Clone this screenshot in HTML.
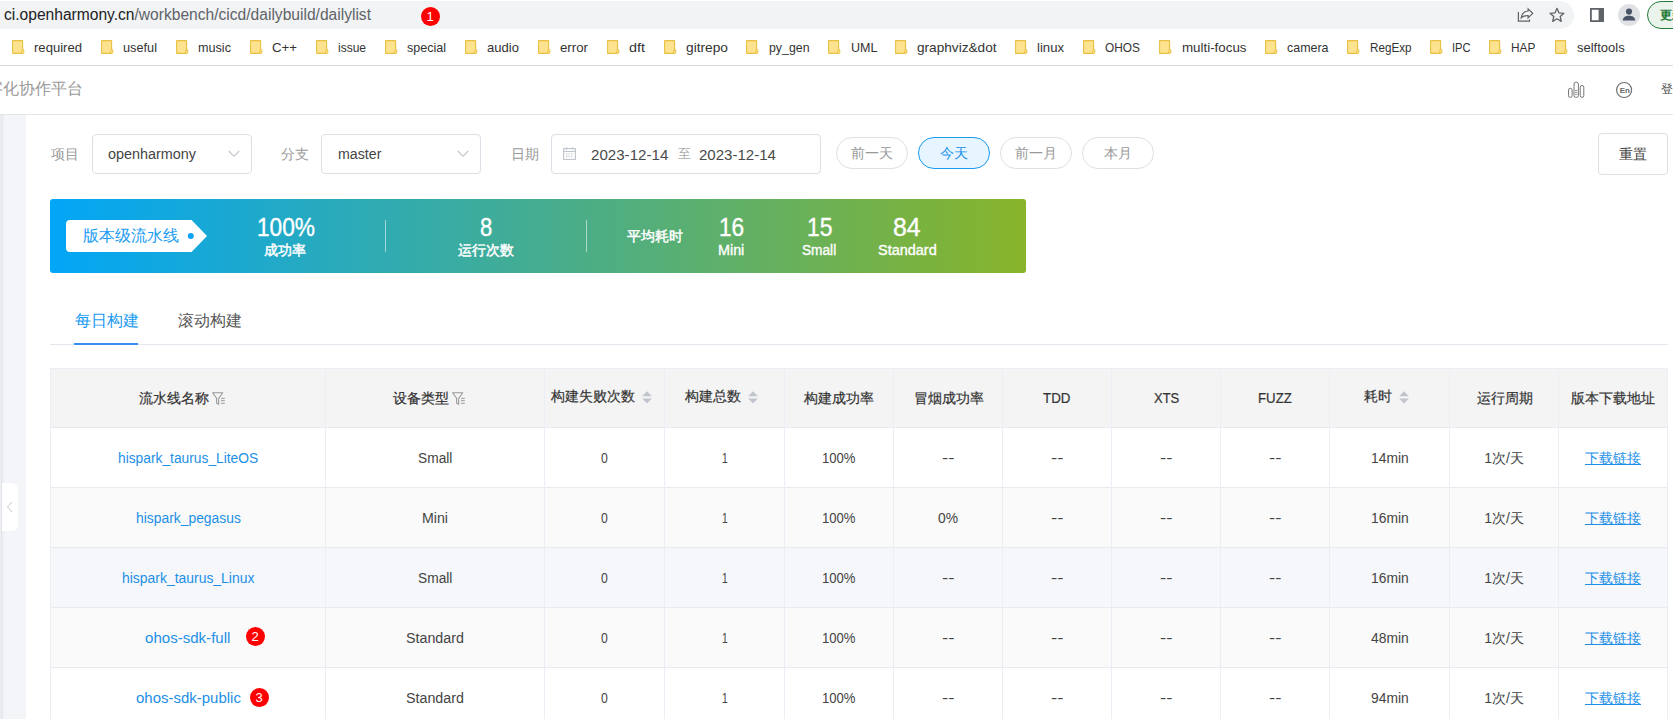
<!DOCTYPE html>
<html><head><meta charset="utf-8"><style>
html,body{margin:0;padding:0;}
body{width:1673px;height:719px;overflow:hidden;position:relative;background:#fff;font-family:"Liberation Sans",sans-serif;}
.t{position:absolute;white-space:nowrap;}
.bx{position:absolute;}
.ic{position:absolute;}
.ann{position:absolute;width:19px;height:19px;border-radius:50%;background:#ff0000;color:#fff;font-size:13px;line-height:19px;text-align:center;font-family:"Liberation Sans",sans-serif;}
</style></head><body>
<!-- browser toolbar -->
<div class="bx" style="left:-30px;top:1px;width:1604px;height:28px;border-radius:14px;background:#f1f3f4"></div>
<div class="bx" style="left:0;top:65px;width:1673px;height:1px;background:#d8dbdb"></div>
<svg class="ic" style="left:12px;top:40px" width="13" height="14" viewBox="0 0 13 14"><rect x="0.6" y="0.6" width="10" height="12.8" rx="0.3" fill="#fde38f" stroke="#e9c043" stroke-width="1.1"/><rect x="9.8" y="9.4" width="2" height="4" rx="1" fill="#fde38f" stroke="#e9c043" stroke-width="1"/></svg><svg class="ic" style="left:101px;top:40px" width="13" height="14" viewBox="0 0 13 14"><rect x="0.6" y="0.6" width="10" height="12.8" rx="0.3" fill="#fde38f" stroke="#e9c043" stroke-width="1.1"/><rect x="9.8" y="9.4" width="2" height="4" rx="1" fill="#fde38f" stroke="#e9c043" stroke-width="1"/></svg><svg class="ic" style="left:176px;top:40px" width="13" height="14" viewBox="0 0 13 14"><rect x="0.6" y="0.6" width="10" height="12.8" rx="0.3" fill="#fde38f" stroke="#e9c043" stroke-width="1.1"/><rect x="9.8" y="9.4" width="2" height="4" rx="1" fill="#fde38f" stroke="#e9c043" stroke-width="1"/></svg><svg class="ic" style="left:250px;top:40px" width="13" height="14" viewBox="0 0 13 14"><rect x="0.6" y="0.6" width="10" height="12.8" rx="0.3" fill="#fde38f" stroke="#e9c043" stroke-width="1.1"/><rect x="9.8" y="9.4" width="2" height="4" rx="1" fill="#fde38f" stroke="#e9c043" stroke-width="1"/></svg><svg class="ic" style="left:316px;top:40px" width="13" height="14" viewBox="0 0 13 14"><rect x="0.6" y="0.6" width="10" height="12.8" rx="0.3" fill="#fde38f" stroke="#e9c043" stroke-width="1.1"/><rect x="9.8" y="9.4" width="2" height="4" rx="1" fill="#fde38f" stroke="#e9c043" stroke-width="1"/></svg><svg class="ic" style="left:385px;top:40px" width="13" height="14" viewBox="0 0 13 14"><rect x="0.6" y="0.6" width="10" height="12.8" rx="0.3" fill="#fde38f" stroke="#e9c043" stroke-width="1.1"/><rect x="9.8" y="9.4" width="2" height="4" rx="1" fill="#fde38f" stroke="#e9c043" stroke-width="1"/></svg><svg class="ic" style="left:465px;top:40px" width="13" height="14" viewBox="0 0 13 14"><rect x="0.6" y="0.6" width="10" height="12.8" rx="0.3" fill="#fde38f" stroke="#e9c043" stroke-width="1.1"/><rect x="9.8" y="9.4" width="2" height="4" rx="1" fill="#fde38f" stroke="#e9c043" stroke-width="1"/></svg><svg class="ic" style="left:538px;top:40px" width="13" height="14" viewBox="0 0 13 14"><rect x="0.6" y="0.6" width="10" height="12.8" rx="0.3" fill="#fde38f" stroke="#e9c043" stroke-width="1.1"/><rect x="9.8" y="9.4" width="2" height="4" rx="1" fill="#fde38f" stroke="#e9c043" stroke-width="1"/></svg><svg class="ic" style="left:607px;top:40px" width="13" height="14" viewBox="0 0 13 14"><rect x="0.6" y="0.6" width="10" height="12.8" rx="0.3" fill="#fde38f" stroke="#e9c043" stroke-width="1.1"/><rect x="9.8" y="9.4" width="2" height="4" rx="1" fill="#fde38f" stroke="#e9c043" stroke-width="1"/></svg><svg class="ic" style="left:664px;top:40px" width="13" height="14" viewBox="0 0 13 14"><rect x="0.6" y="0.6" width="10" height="12.8" rx="0.3" fill="#fde38f" stroke="#e9c043" stroke-width="1.1"/><rect x="9.8" y="9.4" width="2" height="4" rx="1" fill="#fde38f" stroke="#e9c043" stroke-width="1"/></svg><svg class="ic" style="left:746px;top:40px" width="13" height="14" viewBox="0 0 13 14"><rect x="0.6" y="0.6" width="10" height="12.8" rx="0.3" fill="#fde38f" stroke="#e9c043" stroke-width="1.1"/><rect x="9.8" y="9.4" width="2" height="4" rx="1" fill="#fde38f" stroke="#e9c043" stroke-width="1"/></svg><svg class="ic" style="left:828px;top:40px" width="13" height="14" viewBox="0 0 13 14"><rect x="0.6" y="0.6" width="10" height="12.8" rx="0.3" fill="#fde38f" stroke="#e9c043" stroke-width="1.1"/><rect x="9.8" y="9.4" width="2" height="4" rx="1" fill="#fde38f" stroke="#e9c043" stroke-width="1"/></svg><svg class="ic" style="left:895px;top:40px" width="13" height="14" viewBox="0 0 13 14"><rect x="0.6" y="0.6" width="10" height="12.8" rx="0.3" fill="#fde38f" stroke="#e9c043" stroke-width="1.1"/><rect x="9.8" y="9.4" width="2" height="4" rx="1" fill="#fde38f" stroke="#e9c043" stroke-width="1"/></svg><svg class="ic" style="left:1015px;top:40px" width="13" height="14" viewBox="0 0 13 14"><rect x="0.6" y="0.6" width="10" height="12.8" rx="0.3" fill="#fde38f" stroke="#e9c043" stroke-width="1.1"/><rect x="9.8" y="9.4" width="2" height="4" rx="1" fill="#fde38f" stroke="#e9c043" stroke-width="1"/></svg><svg class="ic" style="left:1083px;top:40px" width="13" height="14" viewBox="0 0 13 14"><rect x="0.6" y="0.6" width="10" height="12.8" rx="0.3" fill="#fde38f" stroke="#e9c043" stroke-width="1.1"/><rect x="9.8" y="9.4" width="2" height="4" rx="1" fill="#fde38f" stroke="#e9c043" stroke-width="1"/></svg><svg class="ic" style="left:1159px;top:40px" width="13" height="14" viewBox="0 0 13 14"><rect x="0.6" y="0.6" width="10" height="12.8" rx="0.3" fill="#fde38f" stroke="#e9c043" stroke-width="1.1"/><rect x="9.8" y="9.4" width="2" height="4" rx="1" fill="#fde38f" stroke="#e9c043" stroke-width="1"/></svg><svg class="ic" style="left:1265px;top:40px" width="13" height="14" viewBox="0 0 13 14"><rect x="0.6" y="0.6" width="10" height="12.8" rx="0.3" fill="#fde38f" stroke="#e9c043" stroke-width="1.1"/><rect x="9.8" y="9.4" width="2" height="4" rx="1" fill="#fde38f" stroke="#e9c043" stroke-width="1"/></svg><svg class="ic" style="left:1347px;top:40px" width="13" height="14" viewBox="0 0 13 14"><rect x="0.6" y="0.6" width="10" height="12.8" rx="0.3" fill="#fde38f" stroke="#e9c043" stroke-width="1.1"/><rect x="9.8" y="9.4" width="2" height="4" rx="1" fill="#fde38f" stroke="#e9c043" stroke-width="1"/></svg><svg class="ic" style="left:1430px;top:40px" width="13" height="14" viewBox="0 0 13 14"><rect x="0.6" y="0.6" width="10" height="12.8" rx="0.3" fill="#fde38f" stroke="#e9c043" stroke-width="1.1"/><rect x="9.8" y="9.4" width="2" height="4" rx="1" fill="#fde38f" stroke="#e9c043" stroke-width="1"/></svg><svg class="ic" style="left:1489px;top:40px" width="13" height="14" viewBox="0 0 13 14"><rect x="0.6" y="0.6" width="10" height="12.8" rx="0.3" fill="#fde38f" stroke="#e9c043" stroke-width="1.1"/><rect x="9.8" y="9.4" width="2" height="4" rx="1" fill="#fde38f" stroke="#e9c043" stroke-width="1"/></svg><svg class="ic" style="left:1555px;top:40px" width="13" height="14" viewBox="0 0 13 14"><rect x="0.6" y="0.6" width="10" height="12.8" rx="0.3" fill="#fde38f" stroke="#e9c043" stroke-width="1.1"/><rect x="9.8" y="9.4" width="2" height="4" rx="1" fill="#fde38f" stroke="#e9c043" stroke-width="1"/></svg>
<!-- chrome right icons -->
<svg class="ic" style="left:1516px;top:7px" width="18" height="16" viewBox="0 0 18 16"><path d="M2.4 5.1V14.2H13.5V12.4" fill="none" stroke="#5f6368" stroke-width="1.2"/><path d="M12.1 1.8L16.7 6.3L12.1 10.8V8.6C9 8.4 6.8 9.3 5.2 10.9C5.8 7 8 4.3 12.1 4Z" fill="none" stroke="#5f6368" stroke-width="1.15" stroke-linejoin="miter"/></svg>
<svg class="ic" style="left:1549px;top:7px" width="16" height="16" viewBox="0 0 16 16"><path d="M8 1.3L10 5.9L14.9 6.3L11.2 9.5L12.3 14.4L8 11.8L3.7 14.4L4.8 9.5L1.1 6.3L6 5.9Z" fill="none" stroke="#5f6368" stroke-width="1.3" stroke-linejoin="round"/></svg>
<svg class="ic" style="left:1590px;top:8px" width="14" height="14" viewBox="0 0 14 14"><rect x="0.9" y="0.9" width="12.2" height="12.2" fill="none" stroke="#5f6368" stroke-width="1.8"/><rect x="8.6" y="0.9" width="4.5" height="12.2" fill="#5f6368"/></svg>
<div class="bx" style="left:1618px;top:4px;width:22px;height:22px;border-radius:50%;background:#dfe1e5"></div>
<svg class="ic" style="left:1622px;top:8px" width="14" height="13" viewBox="0 0 14 13"><circle cx="7" cy="3.6" r="3.1" fill="#4b5466"/><path d="M0.8 12.5C0.8 9 4 7.8 7 7.8C10 7.8 13.2 9 13.2 12.5Z" fill="#4b5466"/></svg>
<div class="bx" style="left:1647px;top:1px;width:60px;height:26px;border:1px solid #237a36;border-radius:14px;background:#ebf3ed"></div>
<span class="t" style="left:1660px;top:7px;font-size:12px;line-height:16px;color:#1b7a35;font-weight:700">更新</span>
<!-- app header icons -->
<svg class="ic" style="left:1567px;top:81px" width="18" height="18" viewBox="0 0 18 18"><rect x="1.5" y="7.3" width="3.6" height="9.1" rx="1.8" fill="none" stroke="#777" stroke-width="1"/><rect x="7" y="1.2" width="4.4" height="15.2" rx="1.8" fill="none" stroke="#777" stroke-width="1"/><rect x="13.2" y="4.5" width="3.6" height="11.9" rx="1.8" fill="none" stroke="#777" stroke-width="1"/><path d="M8 9.4H10.4M8 11.4H10.4M8 13.4H10.4" stroke="#888" stroke-width="0.9"/></svg>
<svg class="ic" style="left:1615px;top:81px" width="18" height="18" viewBox="0 0 18 18"><circle cx="9.1" cy="9" r="7.5" fill="none" stroke="#707070" stroke-width="1.2"/></svg>
<span class="t" style="left:1619.8px;top:85px;font-size:8px;line-height:11px;color:#666;font-weight:700;letter-spacing:-0.2px">En</span>
<span class="t" style="left:1661px;top:82px;font-size:12px;line-height:15px;color:#555">登录</span>
<!-- app header -->
<div class="bx" style="left:0;top:114px;width:1673px;height:1px;background:#e3e5e6"></div>
<!-- sidebar -->
<div class="bx" style="left:0;top:115px;width:26px;height:604px;background:linear-gradient(to right,#fdfdfe 0,#dcdfe4 1px,#e9ecf0 2px,#f3f5f8 5px,#f3f5f8 100%)"></div>
<div class="bx" style="left:2px;top:483px;width:16px;height:48px;border-radius:0 6px 6px 0;background:#fff"></div>
<svg class="ic" style="left:6px;top:501px" width="8" height="12" viewBox="0 0 8 12"><path d="M6 1L1.5 6L6 11" fill="none" stroke="#c8c8c8" stroke-width="1"/></svg>
<!-- filter -->
<div class="bx" style="left:92px;top:134px;width:158px;height:38px;border:1px solid #dcdfe6;border-radius:4px"></div>
<div class="bx" style="left:321px;top:134px;width:158px;height:38px;border:1px solid #dcdfe6;border-radius:4px"></div>
<div class="bx" style="left:551px;top:134px;width:268px;height:38px;border:1px solid #dcdfe6;border-radius:4px"></div>
<div class="bx" style="left:1598px;top:133px;width:68px;height:40px;border:1px solid #dcdfe6;border-radius:4px"></div>
<div class="bx" style="left:836px;top:137px;width:70px;height:30px;border:1px solid #e0e0e0;border-radius:16px"></div>
<div class="bx" style="left:918px;top:137px;width:70px;height:30px;border:1px solid #1a9bf0;border-radius:16px;background:#e6f5ff"></div>
<div class="bx" style="left:1000px;top:137px;width:70px;height:30px;border:1px solid #e0e0e0;border-radius:16px"></div>
<div class="bx" style="left:1082px;top:137px;width:70px;height:30px;border:1px solid #e0e0e0;border-radius:16px"></div>
<svg class="ic" style="left:228px;top:150px" width="12" height="8" viewBox="0 0 12 8"><path d="M0.8 1L6 6.3L11.2 1" fill="none" stroke="#c0c4cc" stroke-width="1.1"/></svg>
<svg class="ic" style="left:457px;top:150px" width="12" height="8" viewBox="0 0 12 8"><path d="M0.8 1L6 6.3L11.2 1" fill="none" stroke="#c0c4cc" stroke-width="1.1"/></svg>
<svg class="ic" style="left:563px;top:147px" width="13" height="13" viewBox="0 0 13 13"><rect x="0.6" y="1.6" width="11.8" height="10.8" fill="none" stroke="#c0c4cc" stroke-width="1.1"/><path d="M0.6 4.5H12.4" stroke="#c0c4cc" stroke-width="1.1"/><path d="M3.5 0.3V2.8M9.5 0.3V2.8" stroke="#c0c4cc" stroke-width="1"/><path d="M3 7H10M3 9.3H10" stroke="#c0c4cc" stroke-width="1" stroke-dasharray="1.5 1"/></svg>
<!-- banner -->
<div class="bx" style="left:50px;top:199px;width:976px;height:74px;border-radius:3px;background:linear-gradient(to right,#02a6f7 0%,#88b42a 100%)"></div>
<svg class="ic" style="left:66px;top:220px" width="142" height="32" viewBox="0 0 142 32"><path d="M4 0H125.5L141 16L125.5 32H4Q0 32 0 28V4Q0 0 4 0Z" fill="#fff"/><circle cx="124.8" cy="16" r="3" fill="#0aa2f5"/></svg>
<div class="bx" style="left:385px;top:220px;width:1px;height:32px;background:rgba(255,255,255,0.55)"></div>
<div class="bx" style="left:586px;top:220px;width:1px;height:32px;background:rgba(255,255,255,0.55)"></div>
<!-- tabs -->
<div class="bx" style="left:50px;top:344px;width:1618px;height:1px;background:#e4e7ed"></div>
<div class="bx" style="left:74px;top:343px;width:64px;height:2px;background:#3a8ef0"></div>
<div class="bx" style="left:50px;top:368px;width:1618px;height:59px;background:#f4f4f5"></div><div class="bx" style="left:50px;top:428px;width:1618px;height:59px;background:#ffffff"></div><div class="bx" style="left:50px;top:488px;width:1618px;height:59px;background:#fafafa"></div><div class="bx" style="left:50px;top:548px;width:1618px;height:59px;background:#f5f7fa"></div><div class="bx" style="left:50px;top:608px;width:1618px;height:59px;background:#fafafa"></div><div class="bx" style="left:50px;top:668px;width:1618px;height:59px;background:#ffffff"></div><div class="bx" style="left:50px;top:368px;width:1618px;height:1px;background:#ebeef5"></div><div class="bx" style="left:50px;top:427px;width:1618px;height:1px;background:#e8eaef"></div><div class="bx" style="left:50px;top:487px;width:1618px;height:1px;background:#e8eaef"></div><div class="bx" style="left:50px;top:547px;width:1618px;height:1px;background:#e8eaef"></div><div class="bx" style="left:50px;top:607px;width:1618px;height:1px;background:#e8eaef"></div><div class="bx" style="left:50px;top:667px;width:1618px;height:1px;background:#e8eaef"></div><div class="bx" style="left:50px;top:727px;width:1618px;height:1px;background:#e8eaef"></div><div class="bx" style="left:50px;top:368px;width:1px;height:360px;background:#ebeef5"></div><div class="bx" style="left:325px;top:368px;width:1px;height:360px;background:#ebeef5"></div><div class="bx" style="left:544px;top:368px;width:1px;height:360px;background:#ebeef5"></div><div class="bx" style="left:664px;top:368px;width:1px;height:360px;background:#ebeef5"></div><div class="bx" style="left:784px;top:368px;width:1px;height:360px;background:#ebeef5"></div><div class="bx" style="left:893px;top:368px;width:1px;height:360px;background:#ebeef5"></div><div class="bx" style="left:1002px;top:368px;width:1px;height:360px;background:#ebeef5"></div><div class="bx" style="left:1111px;top:368px;width:1px;height:360px;background:#ebeef5"></div><div class="bx" style="left:1220px;top:368px;width:1px;height:360px;background:#ebeef5"></div><div class="bx" style="left:1329px;top:368px;width:1px;height:360px;background:#ebeef5"></div><div class="bx" style="left:1449px;top:368px;width:1px;height:360px;background:#ebeef5"></div><div class="bx" style="left:1558px;top:368px;width:1px;height:360px;background:#ebeef5"></div><div class="bx" style="left:1667px;top:368px;width:1px;height:360px;background:#ebeef5"></div>
<svg class="ic" style="left:212.0px;top:392px" width="14" height="13" viewBox="0 0 14 13"><path d="M0.7 0.7H10.8L6.7 6.3V12.3L4.6 11.3V6.3Z" fill="none" stroke="#999" stroke-width="1.1" stroke-linejoin="round"/><path d="M9 6.3H12.8M9 8.7H12.8M9 11.3H12.8" stroke="#999" stroke-width="1"/></svg><svg class="ic" style="left:452.1px;top:392px" width="14" height="13" viewBox="0 0 14 13"><path d="M0.7 0.7H10.8L6.7 6.3V12.3L4.6 11.3V6.3Z" fill="none" stroke="#999" stroke-width="1.1" stroke-linejoin="round"/><path d="M9 6.3H12.8M9 8.7H12.8M9 11.3H12.8" stroke="#999" stroke-width="1"/></svg><svg class="ic" style="left:642.4px;top:390.5px" width="10" height="13" viewBox="0 0 10 13"><path d="M5 0.3L9.8 5.3H0.2Z" fill="#c0c4cc"/><path d="M5 12.6L9.8 7.5H0.2Z" fill="#c0c4cc"/></svg><svg class="ic" style="left:748.3px;top:390.5px" width="10" height="13" viewBox="0 0 10 13"><path d="M5 0.3L9.8 5.3H0.2Z" fill="#c0c4cc"/><path d="M5 12.6L9.8 7.5H0.2Z" fill="#c0c4cc"/></svg><svg class="ic" style="left:1399.0px;top:390.5px" width="10" height="13" viewBox="0 0 10 13"><path d="M5 0.3L9.8 5.3H0.2Z" fill="#c0c4cc"/><path d="M5 12.6L9.8 7.5H0.2Z" fill="#c0c4cc"/></svg>
<span id="url1" class="m t" style="left:4.00px;top:4.50px;transform:scaleX(0.9740);transform-origin:0 0;font-size:16px;line-height:20px;color:#202124;font-weight:400;">ci.openharmony.cn<span style="color:#5f6368">/workbench/cicd/dailybuild/dailylist</span></span><span id="bm0" class="m t" style="left:34.00px;top:39.50px;transform:scaleX(1.0062);transform-origin:0 0;font-size:13px;line-height:16px;color:#333;font-weight:400;">required</span><span id="bm1" class="m t" style="left:123.00px;top:39.50px;transform:scaleX(0.9797);transform-origin:0 0;font-size:13px;line-height:16px;color:#333;font-weight:400;">useful</span><span id="bm2" class="m t" style="left:198.00px;top:39.50px;transform:scaleX(0.9719);transform-origin:0 0;font-size:13px;line-height:16px;color:#333;font-weight:400;">music</span><span id="bm3" class="m t" style="left:272.00px;top:39.50px;transform:scaleX(1.0172);transform-origin:0 0;font-size:13px;line-height:16px;color:#333;font-weight:400;">C++</span><span id="bm4" class="m t" style="left:338.00px;top:39.50px;transform:scaleX(0.9223);transform-origin:0 0;font-size:13px;line-height:16px;color:#333;font-weight:400;">issue</span><span id="bm5" class="m t" style="left:407.00px;top:39.50px;transform:scaleX(0.9637);transform-origin:0 0;font-size:13px;line-height:16px;color:#333;font-weight:400;">special</span><span id="bm6" class="m t" style="left:487.00px;top:39.50px;transform:scaleX(1.0059);transform-origin:0 0;font-size:13px;line-height:16px;color:#333;font-weight:400;">audio</span><span id="bm7" class="m t" style="left:560.00px;top:39.50px;transform:scaleX(1.0199);transform-origin:0 0;font-size:13px;line-height:16px;color:#333;font-weight:400;">error</span><span id="bm8" class="m t" style="left:629.00px;top:39.50px;transform:scaleX(1.1058);transform-origin:0 0;font-size:13px;line-height:16px;color:#333;font-weight:400;">dft</span><span id="bm9" class="m t" style="left:686.00px;top:39.50px;transform:scaleX(1.0566);transform-origin:0 0;font-size:13px;line-height:16px;color:#333;font-weight:400;">gitrepo</span><span id="bm10" class="m t" style="left:768.50px;top:39.50px;transform:scaleX(0.9495);transform-origin:0 0;font-size:13px;line-height:16px;color:#333;font-weight:400;">py_gen</span><span id="bm11" class="m t" style="left:850.50px;top:39.50px;transform:scaleX(0.9653);transform-origin:0 0;font-size:13px;line-height:16px;color:#333;font-weight:400;">UML</span><span id="bm12" class="m t" style="left:917.00px;top:39.50px;transform:scaleX(1.0476);transform-origin:0 0;font-size:13px;line-height:16px;color:#333;font-weight:400;">graphviz&amp;dot</span><span id="bm13" class="m t" style="left:1037.00px;top:39.50px;transform:scaleX(1.0093);transform-origin:0 0;font-size:13px;line-height:16px;color:#333;font-weight:400;">linux</span><span id="bm14" class="m t" style="left:1105.00px;top:39.50px;transform:scaleX(0.9139);transform-origin:0 0;font-size:13px;line-height:16px;color:#333;font-weight:400;">OHOS</span><span id="bm15" class="m t" style="left:1181.50px;top:39.50px;transform:scaleX(1.0261);transform-origin:0 0;font-size:13px;line-height:16px;color:#333;font-weight:400;">multi-focus</span><span id="bm16" class="m t" style="left:1287.00px;top:39.50px;transform:scaleX(0.9571);transform-origin:0 0;font-size:13px;line-height:16px;color:#333;font-weight:400;">camera</span><span id="bm17" class="m t" style="left:1369.50px;top:39.50px;transform:scaleX(0.8973);transform-origin:0 0;font-size:13px;line-height:16px;color:#333;font-weight:400;">RegExp</span><span id="bm18" class="m t" style="left:1452.00px;top:39.50px;transform:scaleX(0.8583);transform-origin:0 0;font-size:13px;line-height:16px;color:#333;font-weight:400;">IPC</span><span id="bm19" class="m t" style="left:1511.30px;top:39.50px;transform:scaleX(0.9127);transform-origin:0 0;font-size:13px;line-height:16px;color:#333;font-weight:400;">HAP</span><span id="bm20" class="m t" style="left:1577.30px;top:39.50px;transform:scaleX(0.9999);transform-origin:0 0;font-size:13px;line-height:16px;color:#333;font-weight:400;">selftools</span><span id="hdr" class="m t" style="left:-13.00px;top:79.00px;font-size:16px;line-height:20px;color:#999;font-weight:400;">字化协作平台</span><span id="lbl1" class="m t" style="left:50.50px;top:145.00px;font-size:14px;line-height:18px;color:#999;font-weight:400;">项目</span><span id="sel1" class="m t" style="left:108.30px;top:145.00px;transform:scaleX(1.0277);transform-origin:0 0;font-size:14px;line-height:18px;color:#444;font-weight:400;">openharmony</span><span id="lbl2" class="m t" style="left:280.50px;top:145.00px;font-size:14px;line-height:18px;color:#999;font-weight:400;">分支</span><span id="sel2" class="m t" style="left:337.60px;top:145.00px;transform:scaleX(1.0141);transform-origin:0 0;font-size:14px;line-height:18px;color:#444;font-weight:400;">master</span><span id="lbl3" class="m t" style="left:511.00px;top:145.00px;font-size:14px;line-height:18px;color:#999;font-weight:400;">日期</span><span id="d1" class="m t" style="left:591.00px;top:146.00px;transform:scaleX(1.0792);transform-origin:0 0;font-size:14px;line-height:18px;color:#4a4a4a;font-weight:400;">2023-12-14</span><span id="d2" class="m t" style="left:677.80px;top:146.00px;font-size:13px;line-height:16px;color:#aaa;font-weight:400;">至</span><span id="d3" class="m t" style="left:699.00px;top:146.00px;transform:scaleX(1.0750);transform-origin:0 0;font-size:14px;line-height:18px;color:#4a4a4a;font-weight:400;">2023-12-14</span><span id="pill0" class="m t" style="left:851.00px;top:144.00px;transform:scaleX(1.0000);transform-origin:0 0;font-size:14px;line-height:18px;color:#999;font-weight:400;">前一天</span><span id="pill1" class="m t" style="left:940.00px;top:144.00px;transform:scaleX(1.0000);transform-origin:0 0;font-size:14px;line-height:18px;color:#1a8fe8;font-weight:400;">今天</span><span id="pill2" class="m t" style="left:1015.00px;top:144.00px;transform:scaleX(1.0000);transform-origin:0 0;font-size:14px;line-height:18px;color:#999;font-weight:400;">前一月</span><span id="pill3" class="m t" style="left:1104.00px;top:144.00px;transform:scaleX(1.0000);transform-origin:0 0;font-size:14px;line-height:18px;color:#999;font-weight:400;">本月</span><span id="reset" class="m t" style="left:1619.00px;top:145.00px;transform:scaleX(1.0000);transform-origin:0 0;font-size:14px;line-height:18px;color:#444;font-weight:400;">重置</span><span id="tag" class="m t" style="left:82.50px;top:226.00px;font-size:16px;line-height:20px;color:#1b9cf2;font-weight:400;">版本级流水线</span><span id="s1n" class="m t" style="left:257.00px;top:211.50px;transform:scaleX(0.9069);transform-origin:0 0;font-size:25px;line-height:31px;color:#fff;font-weight:400;-webkit-text-stroke:0.35px #fff;">100%</span><span id="s1l" class="m t" style="left:264.30px;top:241.00px;transform:scaleX(1.0000);transform-origin:0 0;font-size:14px;line-height:18px;color:#fff;font-weight:400;-webkit-text-stroke:0.45px #fff;">成功率</span><span id="s2n" class="m t" style="left:480.05px;top:211.50px;transform:scaleX(0.8845);transform-origin:0 0;font-size:25px;line-height:31px;color:#fff;font-weight:400;-webkit-text-stroke:0.35px #fff;">8</span><span id="s2l" class="m t" style="left:458.40px;top:241.00px;transform:scaleX(1.0000);transform-origin:0 0;font-size:14px;line-height:18px;color:#fff;font-weight:400;-webkit-text-stroke:0.45px #fff;">运行次数</span><span id="avg" class="m t" style="left:627.30px;top:227.00px;transform:scaleX(1.0000);transform-origin:0 0;font-size:14px;line-height:18px;color:#fff;font-weight:400;-webkit-text-stroke:0.45px #fff;">平均耗时</span><span id="s3n" class="m t" style="left:719.00px;top:211.50px;transform:scaleX(0.9061);transform-origin:0 0;font-size:25px;line-height:31px;color:#fff;font-weight:400;-webkit-text-stroke:0.35px #fff;">16</span><span id="s3l" class="m t" style="left:717.85px;top:241.00px;transform:scaleX(1.0245);transform-origin:0 0;font-size:14px;line-height:18px;color:#fff;font-weight:400;-webkit-text-stroke:0.35px #fff;">Mini</span><span id="s4n" class="m t" style="left:806.65px;top:211.50px;transform:scaleX(0.9169);transform-origin:0 0;font-size:25px;line-height:31px;color:#fff;font-weight:400;-webkit-text-stroke:0.35px #fff;">15</span><span id="s4l" class="m t" style="left:801.80px;top:241.00px;transform:scaleX(0.9767);transform-origin:0 0;font-size:14px;line-height:18px;color:#fff;font-weight:400;-webkit-text-stroke:0.35px #fff;">Small</span><span id="s5n" class="m t" style="left:893.40px;top:211.50px;transform:scaleX(0.9924);transform-origin:0 0;font-size:25px;line-height:31px;color:#fff;font-weight:400;-webkit-text-stroke:0.35px #fff;">84</span><span id="s5l" class="m t" style="left:877.65px;top:241.00px;transform:scaleX(1.0329);transform-origin:0 0;font-size:14px;line-height:18px;color:#fff;font-weight:400;-webkit-text-stroke:0.35px #fff;">Standard</span><span id="tab1" class="m t" style="left:74.90px;top:311.00px;font-size:16px;line-height:20px;color:#1a9af0;font-weight:400;">每日构建</span><span id="tab2" class="m t" style="left:178.40px;top:311.00px;font-size:16px;line-height:20px;color:#555;font-weight:400;">滚动构建</span><span id="h0" class="m t" style="left:139.20px;top:389.20px;font-size:14px;line-height:18px;color:#333;font-weight:400;-webkit-text-stroke:0.2px #333;">流水线名称</span><span id="h1" class="m t" style="left:393.30px;top:389.20px;font-size:14px;line-height:18px;color:#333;font-weight:400;-webkit-text-stroke:0.2px #333;">设备类型</span><span id="h2" class="m t" style="left:551.00px;top:387.30px;font-size:14px;line-height:18px;color:#333;font-weight:400;-webkit-text-stroke:0.2px #333;">构建失败次数</span><span id="h3" class="m t" style="left:684.90px;top:387.30px;font-size:14px;line-height:18px;color:#333;font-weight:400;-webkit-text-stroke:0.2px #333;">构建总数</span><span id="h4" class="m t" style="left:804.30px;top:389.20px;font-size:14px;line-height:18px;color:#333;font-weight:400;-webkit-text-stroke:0.2px #333;">构建成功率</span><span id="h5" class="m t" style="left:914.00px;top:389.20px;font-size:14px;line-height:18px;color:#333;font-weight:400;-webkit-text-stroke:0.2px #333;">冒烟成功率</span><span id="h6" class="m t" style="left:1043.00px;top:389.20px;transform:scaleX(0.9520);transform-origin:0 0;font-size:14px;line-height:18px;color:#333;font-weight:400;-webkit-text-stroke:0.2px #333;">TDD</span><span id="h7" class="m t" style="left:1153.70px;top:389.20px;transform:scaleX(0.9290);transform-origin:0 0;font-size:14px;line-height:18px;color:#333;font-weight:400;-webkit-text-stroke:0.2px #333;">XTS</span><span id="h8" class="m t" style="left:1258.40px;top:389.20px;transform:scaleX(0.9450);transform-origin:0 0;font-size:14px;line-height:18px;color:#333;font-weight:400;-webkit-text-stroke:0.2px #333;">FUZZ</span><span id="h9" class="m t" style="left:1363.60px;top:387.30px;font-size:14px;line-height:18px;color:#333;font-weight:400;-webkit-text-stroke:0.2px #333;">耗时</span><span id="h10" class="m t" style="left:1476.50px;top:389.20px;font-size:14px;line-height:18px;color:#333;font-weight:400;-webkit-text-stroke:0.2px #333;">运行周期</span><span id="h11" class="m t" style="left:1571.20px;top:389.20px;font-size:14px;line-height:18px;color:#333;font-weight:400;-webkit-text-stroke:0.2px #333;">版本下载地址</span><span id="r0c0" class="m t" style="left:117.90px;top:449.00px;transform:scaleX(0.9844);transform-origin:0 0;font-size:14px;line-height:18px;color:#1d8fe6;font-weight:400;">hispark_taurus_LiteOS</span><span id="r0c1" class="m t" style="left:417.80px;top:449.00px;transform:scaleX(0.9824);transform-origin:0 0;font-size:14px;line-height:18px;color:#444;font-weight:400;">Small</span><span id="r0c2" class="m t" style="left:601.10px;top:449.00px;transform:scaleX(0.8721);transform-origin:0 0;font-size:14px;line-height:18px;color:#444;font-weight:400;">0</span><span id="r0c3" class="m t" style="left:721.65px;top:449.00px;transform:scaleX(0.7311);transform-origin:0 0;font-size:14px;line-height:18px;color:#444;font-weight:400;">1</span><span id="r0c4" class="m t" style="left:822.25px;top:449.00px;transform:scaleX(0.9354);transform-origin:0 0;font-size:14px;line-height:18px;color:#444;font-weight:400;">100%</span><span id="r0c5" class="m t" style="left:941.80px;top:449.00px;transform:scaleX(1.3293);transform-origin:0 0;font-size:14px;line-height:18px;color:#444;font-weight:400;">--</span><span id="r0c6" class="m t" style="left:1050.80px;top:449.00px;transform:scaleX(1.3293);transform-origin:0 0;font-size:14px;line-height:18px;color:#444;font-weight:400;">--</span><span id="r0c7" class="m t" style="left:1159.80px;top:449.00px;transform:scaleX(1.3293);transform-origin:0 0;font-size:14px;line-height:18px;color:#444;font-weight:400;">--</span><span id="r0c8" class="m t" style="left:1268.80px;top:449.00px;transform:scaleX(1.3293);transform-origin:0 0;font-size:14px;line-height:18px;color:#444;font-weight:400;">--</span><span id="r0c9" class="m t" style="left:1370.65px;top:449.00px;transform:scaleX(0.9884);transform-origin:0 0;font-size:14px;line-height:18px;color:#444;font-weight:400;">14min</span><span id="r0c10" class="m t" style="left:1484.16px;top:449.00px;transform:scaleX(1.0000);transform-origin:0 0;font-size:14px;line-height:18px;color:#444;font-weight:400;">1次/天</span><span id="r0c11" class="m t" style="left:1585.00px;top:449.00px;transform:scaleX(1.0000);transform-origin:0 0;font-size:14px;line-height:18px;color:#1d8fe6;font-weight:400;text-decoration:underline;text-underline-offset:1px;">下载链接</span><span id="r1c0" class="m t" style="left:135.55px;top:509.00px;transform:scaleX(0.9909);transform-origin:0 0;font-size:14px;line-height:18px;color:#1d8fe6;font-weight:400;">hispark_pegasus</span><span id="r1c1" class="m t" style="left:422.00px;top:509.00px;transform:scaleX(1.0128);transform-origin:0 0;font-size:14px;line-height:18px;color:#444;font-weight:400;">Mini</span><span id="r1c2" class="m t" style="left:601.10px;top:509.00px;transform:scaleX(0.8721);transform-origin:0 0;font-size:14px;line-height:18px;color:#444;font-weight:400;">0</span><span id="r1c3" class="m t" style="left:721.65px;top:509.00px;transform:scaleX(0.7311);transform-origin:0 0;font-size:14px;line-height:18px;color:#444;font-weight:400;">1</span><span id="r1c4" class="m t" style="left:822.25px;top:509.00px;transform:scaleX(0.9354);transform-origin:0 0;font-size:14px;line-height:18px;color:#444;font-weight:400;">100%</span><span id="r1c5" class="m t" style="left:938.00px;top:509.00px;transform:scaleX(0.9884);transform-origin:0 0;font-size:14px;line-height:18px;color:#444;font-weight:400;">0%</span><span id="r1c6" class="m t" style="left:1050.80px;top:509.00px;transform:scaleX(1.3293);transform-origin:0 0;font-size:14px;line-height:18px;color:#444;font-weight:400;">--</span><span id="r1c7" class="m t" style="left:1159.80px;top:509.00px;transform:scaleX(1.3293);transform-origin:0 0;font-size:14px;line-height:18px;color:#444;font-weight:400;">--</span><span id="r1c8" class="m t" style="left:1268.80px;top:509.00px;transform:scaleX(1.3293);transform-origin:0 0;font-size:14px;line-height:18px;color:#444;font-weight:400;">--</span><span id="r1c9" class="m t" style="left:1370.65px;top:509.00px;transform:scaleX(0.9884);transform-origin:0 0;font-size:14px;line-height:18px;color:#444;font-weight:400;">16min</span><span id="r1c10" class="m t" style="left:1484.16px;top:509.00px;transform:scaleX(1.0000);transform-origin:0 0;font-size:14px;line-height:18px;color:#444;font-weight:400;">1次/天</span><span id="r1c11" class="m t" style="left:1585.00px;top:509.00px;transform:scaleX(1.0000);transform-origin:0 0;font-size:14px;line-height:18px;color:#1d8fe6;font-weight:400;text-decoration:underline;text-underline-offset:1px;">下载链接</span><span id="r2c0" class="m t" style="left:121.80px;top:569.00px;transform:scaleX(0.9948);transform-origin:0 0;font-size:14px;line-height:18px;color:#1d8fe6;font-weight:400;">hispark_taurus_Linux</span><span id="r2c1" class="m t" style="left:417.80px;top:569.00px;transform:scaleX(0.9824);transform-origin:0 0;font-size:14px;line-height:18px;color:#444;font-weight:400;">Small</span><span id="r2c2" class="m t" style="left:601.10px;top:569.00px;transform:scaleX(0.8721);transform-origin:0 0;font-size:14px;line-height:18px;color:#444;font-weight:400;">0</span><span id="r2c3" class="m t" style="left:721.65px;top:569.00px;transform:scaleX(0.7311);transform-origin:0 0;font-size:14px;line-height:18px;color:#444;font-weight:400;">1</span><span id="r2c4" class="m t" style="left:822.25px;top:569.00px;transform:scaleX(0.9354);transform-origin:0 0;font-size:14px;line-height:18px;color:#444;font-weight:400;">100%</span><span id="r2c5" class="m t" style="left:941.80px;top:569.00px;transform:scaleX(1.3293);transform-origin:0 0;font-size:14px;line-height:18px;color:#444;font-weight:400;">--</span><span id="r2c6" class="m t" style="left:1050.80px;top:569.00px;transform:scaleX(1.3293);transform-origin:0 0;font-size:14px;line-height:18px;color:#444;font-weight:400;">--</span><span id="r2c7" class="m t" style="left:1159.80px;top:569.00px;transform:scaleX(1.3293);transform-origin:0 0;font-size:14px;line-height:18px;color:#444;font-weight:400;">--</span><span id="r2c8" class="m t" style="left:1268.80px;top:569.00px;transform:scaleX(1.3293);transform-origin:0 0;font-size:14px;line-height:18px;color:#444;font-weight:400;">--</span><span id="r2c9" class="m t" style="left:1370.65px;top:569.00px;transform:scaleX(0.9884);transform-origin:0 0;font-size:14px;line-height:18px;color:#444;font-weight:400;">16min</span><span id="r2c10" class="m t" style="left:1484.16px;top:569.00px;transform:scaleX(1.0000);transform-origin:0 0;font-size:14px;line-height:18px;color:#444;font-weight:400;">1次/天</span><span id="r2c11" class="m t" style="left:1585.00px;top:569.00px;transform:scaleX(1.0000);transform-origin:0 0;font-size:14px;line-height:18px;color:#1d8fe6;font-weight:400;text-decoration:underline;text-underline-offset:1px;">下载链接</span><span id="r3c0" class="m t" style="left:145.30px;top:629.00px;transform:scaleX(1.0759);transform-origin:0 0;font-size:14px;line-height:18px;color:#1d8fe6;font-weight:400;">ohos-sdk-full</span><span id="r3c1" class="m t" style="left:406.05px;top:629.00px;transform:scaleX(1.0189);transform-origin:0 0;font-size:14px;line-height:18px;color:#444;font-weight:400;">Standard</span><span id="r3c2" class="m t" style="left:601.10px;top:629.00px;transform:scaleX(0.8721);transform-origin:0 0;font-size:14px;line-height:18px;color:#444;font-weight:400;">0</span><span id="r3c3" class="m t" style="left:721.65px;top:629.00px;transform:scaleX(0.7311);transform-origin:0 0;font-size:14px;line-height:18px;color:#444;font-weight:400;">1</span><span id="r3c4" class="m t" style="left:822.25px;top:629.00px;transform:scaleX(0.9354);transform-origin:0 0;font-size:14px;line-height:18px;color:#444;font-weight:400;">100%</span><span id="r3c5" class="m t" style="left:941.80px;top:629.00px;transform:scaleX(1.3293);transform-origin:0 0;font-size:14px;line-height:18px;color:#444;font-weight:400;">--</span><span id="r3c6" class="m t" style="left:1050.80px;top:629.00px;transform:scaleX(1.3293);transform-origin:0 0;font-size:14px;line-height:18px;color:#444;font-weight:400;">--</span><span id="r3c7" class="m t" style="left:1159.80px;top:629.00px;transform:scaleX(1.3293);transform-origin:0 0;font-size:14px;line-height:18px;color:#444;font-weight:400;">--</span><span id="r3c8" class="m t" style="left:1268.80px;top:629.00px;transform:scaleX(1.3293);transform-origin:0 0;font-size:14px;line-height:18px;color:#444;font-weight:400;">--</span><span id="r3c9" class="m t" style="left:1370.65px;top:629.00px;transform:scaleX(0.9884);transform-origin:0 0;font-size:14px;line-height:18px;color:#444;font-weight:400;">48min</span><span id="r3c10" class="m t" style="left:1484.16px;top:629.00px;transform:scaleX(1.0000);transform-origin:0 0;font-size:14px;line-height:18px;color:#444;font-weight:400;">1次/天</span><span id="r3c11" class="m t" style="left:1585.00px;top:629.00px;transform:scaleX(1.0000);transform-origin:0 0;font-size:14px;line-height:18px;color:#1d8fe6;font-weight:400;text-decoration:underline;text-underline-offset:1px;">下载链接</span><span id="r4c0" class="m t" style="left:135.55px;top:689.00px;transform:scaleX(1.0697);transform-origin:0 0;font-size:14px;line-height:18px;color:#1d8fe6;font-weight:400;">ohos-sdk-public</span><span id="r4c1" class="m t" style="left:406.05px;top:689.00px;transform:scaleX(1.0189);transform-origin:0 0;font-size:14px;line-height:18px;color:#444;font-weight:400;">Standard</span><span id="r4c2" class="m t" style="left:601.10px;top:689.00px;transform:scaleX(0.8721);transform-origin:0 0;font-size:14px;line-height:18px;color:#444;font-weight:400;">0</span><span id="r4c3" class="m t" style="left:721.65px;top:689.00px;transform:scaleX(0.7311);transform-origin:0 0;font-size:14px;line-height:18px;color:#444;font-weight:400;">1</span><span id="r4c4" class="m t" style="left:822.25px;top:689.00px;transform:scaleX(0.9354);transform-origin:0 0;font-size:14px;line-height:18px;color:#444;font-weight:400;">100%</span><span id="r4c5" class="m t" style="left:941.80px;top:689.00px;transform:scaleX(1.3293);transform-origin:0 0;font-size:14px;line-height:18px;color:#444;font-weight:400;">--</span><span id="r4c6" class="m t" style="left:1050.80px;top:689.00px;transform:scaleX(1.3293);transform-origin:0 0;font-size:14px;line-height:18px;color:#444;font-weight:400;">--</span><span id="r4c7" class="m t" style="left:1159.80px;top:689.00px;transform:scaleX(1.3293);transform-origin:0 0;font-size:14px;line-height:18px;color:#444;font-weight:400;">--</span><span id="r4c8" class="m t" style="left:1268.80px;top:689.00px;transform:scaleX(1.3293);transform-origin:0 0;font-size:14px;line-height:18px;color:#444;font-weight:400;">--</span><span id="r4c9" class="m t" style="left:1370.65px;top:689.00px;transform:scaleX(0.9884);transform-origin:0 0;font-size:14px;line-height:18px;color:#444;font-weight:400;">94min</span><span id="r4c10" class="m t" style="left:1484.16px;top:689.00px;transform:scaleX(1.0000);transform-origin:0 0;font-size:14px;line-height:18px;color:#444;font-weight:400;">1次/天</span><span id="r4c11" class="m t" style="left:1585.00px;top:689.00px;transform:scaleX(1.0000);transform-origin:0 0;font-size:14px;line-height:18px;color:#1d8fe6;font-weight:400;text-decoration:underline;text-underline-offset:1px;">下载链接</span>
<div class="ann" style="left:420.5px;top:6.5px">1</div><div class="ann" style="left:245.5px;top:626.5px">2</div><div class="ann" style="left:249.5px;top:688.0px">3</div>
</body></html>
